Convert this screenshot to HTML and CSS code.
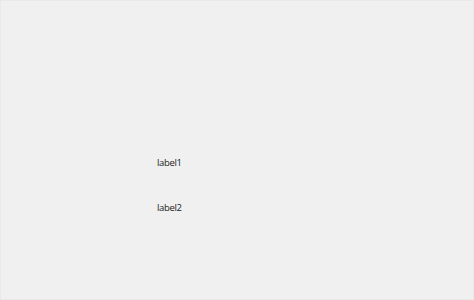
FILE: index.html
```html
<!DOCTYPE html>
<html>
<head>
<meta charset="utf-8">
<link rel="stylesheet" href="styles.css">
</head>
<body>
<div class="form">
  <div class="labels">
    <span class="label">label1</span>
    <span class="label">label2</span>
  </div>
</div>
</body>
</html>
```
FILE: styles.css
```css
html, body {
  margin: 0;
  padding: 0;
  background: #f0f0f0;
}
.form {
  box-sizing: border-box;
  width: 474px;
  height: 300px;
  background: #f0f0f0;
  border: 1px solid #e9e9e9;
  padding: 155px 0 0 156px;
}
.labels {
  display: flex;
  flex-direction: column;
  gap: 31px;
  align-items: flex-start;
}
.label {
  font-family: "Open Sans", "Noto Sans", sans-serif;
  font-size: 9.5px;
  letter-spacing: -0.35px;
  line-height: 14px;
  color: #222222;
}
```
